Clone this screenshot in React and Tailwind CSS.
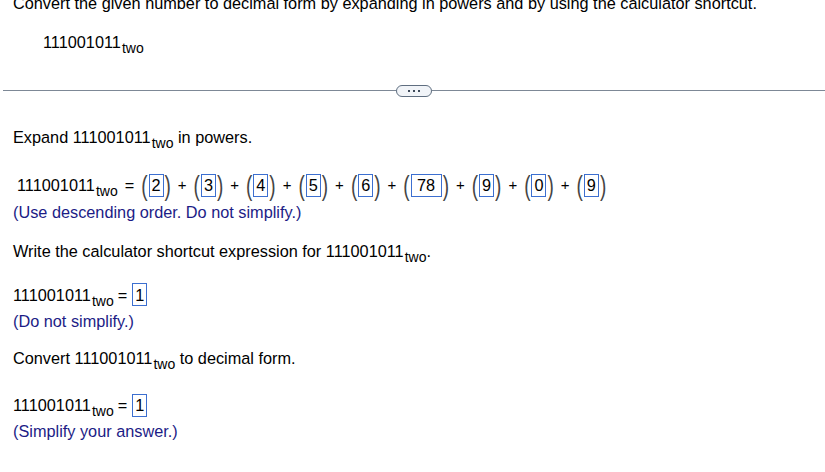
import React from "react";

const Num = ({ children }) => (
  <span>
    111001011<sub className="text-[14px] relative top-[5px] align-baseline ml-[1px]">two</sub>
    {children}
  </span>
);

const Box = ({ v, w = "w-[15px]" }) => (
  <span className={`inline-flex items-center justify-center h-[23px] ${w} border border-[#3c6fd0] leading-none`}>
    {v}
  </span>
);

const Paren = ({ c }) => (
  <span className="inline-block text-[19px] text-[#444] scale-y-[1.5] leading-none">{c}</span>
);

const Term = ({ v }) => (
  <span className="inline-flex items-center gap-[1px]">
    <Paren c="(" />
    <Box v={v} w={v.length > 1 ? "w-[31px]" : "w-[15px]"} />
    <Paren c=")" />
  </span>
);

export default function App() {
  const terms = ["2", "3", "4", "5", "6", "78", "9", "0", "9"];
  return (
    <div
      className="w-[825px] h-[472px] overflow-hidden bg-white text-black text-[16.3px]"
      style={{ fontFamily: '"Liberation Sans", Arial, sans-serif' }}
    >
      <div className="px-[13px] -mt-[9px]">
        Convert the given number to decimal form by expanding in powers and by using the calculator shortcut.
      </div>
      <div className="pl-[43px] mt-[15px]">
        <Num />
      </div>

      <div className="flex items-center pl-[3px] mt-[30px]">
        <div className="flex-1 h-[1px] bg-[#7d8896]"></div>
        <div className="w-[36px] h-[12px] rounded-full border border-[#5f6e80] bg-[#f1f4f8] flex items-center justify-center gap-[3px]">
          <span className="w-[2px] h-[2px] bg-[#3e4a5a]"></span>
          <span className="w-[2px] h-[2px] bg-[#3e4a5a]"></span>
          <span className="w-[2px] h-[2px] bg-[#3e4a5a]"></span>
        </div>
        <div className="flex-1 h-[1px] bg-[#7d8896]"></div>
      </div>

      <div className="px-[13px] mt-[28px]">
        Expand <Num /> in powers.
      </div>

      <div className="pl-[17px] mt-[24px] flex items-center">
        <Num />
        <span className="ml-[7px] mr-[7px]">=</span>
        {terms.map((t, i) => (
          <React.Fragment key={i}>
            {i > 0 && <span className="mx-[7px] text-[15px]">+</span>}
            <Term v={t} />
          </React.Fragment>
        ))}
      </div>
      <div className="px-[13px] mt-[2px] text-[#1c1c86]">(Use descending order. Do not simplify.)</div>

      <div className="px-[13px] mt-[15px]">
        Write the calculator shortcut expression for <Num>.</Num>
      </div>

      <div className="pl-[13px] mt-[19px] flex items-center">
        <Num />
        <span className="ml-[4px] mr-[5px]">=</span>
        <Box v="1" />
      </div>
      <div className="px-[13px] mt-[2px] text-[#1c1c86]">(Do not simplify.)</div>

      <div className="px-[13px] mt-[12px]">
        Convert <Num /> to decimal form.
      </div>

      <div className="pl-[13px] mt-[23px] flex items-center">
        <Num />
        <span className="ml-[4px] mr-[5px]">=</span>
        <Box v="1" />
      </div>
      <div className="px-[13px] mt-[2px] text-[#1c1c86]">(Simplify your answer.)</div>
    </div>
  );
}
